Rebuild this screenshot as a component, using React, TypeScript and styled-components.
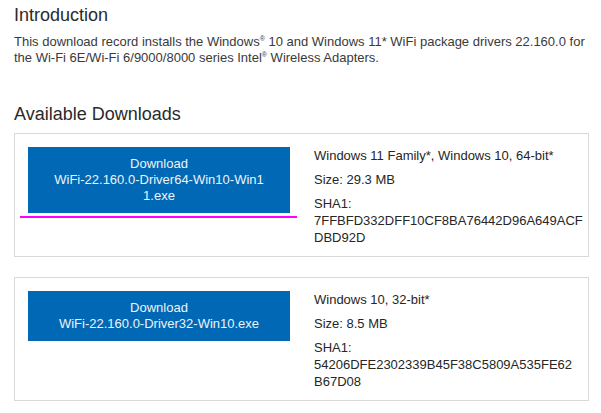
import React from "react";
import styled, { createGlobalStyle } from "styled-components";

const Global = createGlobalStyle`
  html, body { margin: 0; padding: 0; background: #ffffff; }
  body { font-family: "Liberation Sans", Arial, sans-serif; color: #262626; }
  * { box-sizing: border-box; }
`;

const Page = styled.main`
  width: 601px;
  padding: 4px 12px 0 14px;
`;

const Section = styled.section<{ $gap?: number }>`
  display: flex;
  flex-direction: column;
  margin-bottom: ${(p) => p.$gap ?? 0}px;
`;

const Heading = styled.h2`
  margin: 0 0 8px 0;
  font-size: 18px;
  line-height: 22px;
  font-weight: 400;
  color: #2a2a2a;
`;

const Intro = styled.p`
  margin: 0;
  font-size: 13px;
  line-height: 16px;
  color: #3a3a3a;
`;

const Reg = styled.sup`
  font-size: 7px;
  line-height: 0;
  vertical-align: 5px;
`;

const CardList = styled.div`
  display: flex;
  flex-direction: column;
  gap: 20px;
`;

const Card = styled.div`
  position: relative;
  display: flex;
  align-items: flex-start;
  gap: 24px;
  padding: 13px 13px 10px 13px;
  border: 1px solid #d9d9d9;
`;

const DownloadButton = styled.a`
  flex: 0 0 262px;
  display: block;
  padding: 9px 24px;
  background: #0068b5;
  color: #eef3f9;
  font-size: 13px;
  line-height: 16px;
  text-align: center;
  text-decoration: none;
  word-break: break-all;
`;

const Details = styled.div`
  flex: 1;
  display: flex;
  flex-direction: column;
  gap: 7px;
  font-size: 13px;
  line-height: 17px;
  color: #262626;
`;

const Line = styled.div`
  white-space: nowrap;
`;

const Marker = styled.span`
  position: absolute;
  left: 5px;
  top: 82px;
  width: 277px;
  height: 2px;
  background: #ff00ff;
`;

type Download = {
  file: string;
  os: string;
  size: string;
  sha: string[];
  marked?: boolean;
};

const downloads: Download[] = [
  {
    file: "WiFi-22.160.0-Driver64-Win10-Win11.exe",
    os: "Windows 11 Family*, Windows 10, 64-bit*",
    size: "29.3 MB",
    sha: ["7FFBFD332DFF10CF8BA76442D96A649ACF", "DBD92D"],
    marked: true,
  },
  {
    file: "WiFi-22.160.0-Driver32-Win10.exe",
    os: "Windows 10, 32-bit*",
    size: "8.5 MB",
    sha: ["54206DFE2302339B45F38C5809A535FE62", "B67D08"],
  },
];

export default function App() {
  return (
    <>
      <Global />
      <Page>
        <Section $gap={37}>
          <Heading>Introduction</Heading>
          <Intro>
            This download record installs the Windows<Reg>®</Reg> 10 and Windows 11* WiFi package drivers 22.160.0 for
            the Wi-Fi 6E/Wi-Fi 6/9000/8000 series Intel<Reg>®</Reg> Wireless Adapters.
          </Intro>
        </Section>
        <Section>
          <Heading>Available Downloads</Heading>
          <CardList>
            {downloads.map((d) => (
              <Card key={d.file}>
                <DownloadButton href="#">
                  Download
                  <br />
                  {d.file}
                </DownloadButton>
                <Details>
                  <Line>{d.os}</Line>
                  <Line>Size: {d.size}</Line>
                  <div>
                    <Line>SHA1:</Line>
                    {d.sha.map((s) => (
                      <Line key={s}>{s}</Line>
                    ))}
                  </div>
                </Details>
                {d.marked && <Marker />}
              </Card>
            ))}
          </CardList>
        </Section>
      </Page>
    </>
  );
}
